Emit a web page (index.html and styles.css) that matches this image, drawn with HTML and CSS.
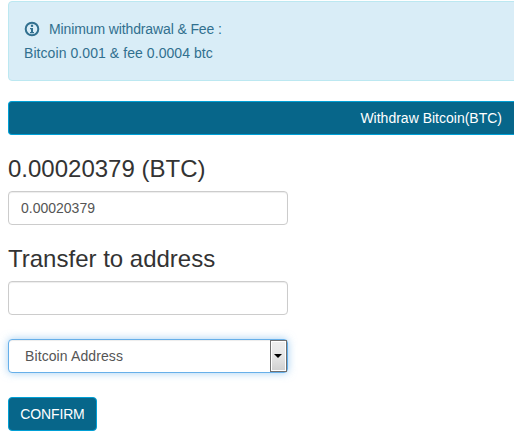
FILE: index.html
```html
<!DOCTYPE html>
<html lang="en">
<head>
  <meta charset="UTF-8" />
  <title>Withdraw Bitcoin</title>
  <link rel="stylesheet" href="styles.css">
</head>
<body>

<div class="alert">
  <p class="alert-line">
    <svg class="info-icon" viewBox="0 0 16 16" width="16" height="16" aria-hidden="true">
      <circle cx="8" cy="8" r="6.3" fill="none" stroke="#31708f" stroke-width="2"/>
      <rect x="6.9" y="3.7" width="2.2" height="2.2" fill="#31708f"/>
      <path d="M6 7h3v4h1v1.3H6V11h1V8.3H6z" fill="#31708f"/>
    </svg>
    <span class="alert-title">Minimum withdrawal &amp; Fee :</span>
  </p>
  <p class="alert-line alert-fee">Bitcoin 0.001 &amp; fee 0.0004 btc</p>
</div>

<div class="bar">Withdraw Bitcoin(BTC)</div>

<form class="withdraw-form">
  <h3>0.00020379 (BTC)</h3>
  <input class="field" type="text" value="0.00020379">

  <h3 class="second">Transfer to address</h3>
  <input class="field" type="text">

  <div class="select-wrap">
    <select class="field select">
      <option>Bitcoin Address</option>
    </select>
    <span class="select-arrow"></span>
  </div>

  <button class="confirm" type="button">CONFIRM</button>
</form>

</body>
</html>
```

FILE: styles.css
```css
html, body {
  overflow: hidden;
}
body {
  font-family: 'Liberation Sans', Arial, sans-serif;
  font-size: 14px;
  color: #333;
  background: #fff;
  margin: 0;
  padding: 1px 0 0 8px;
  height: 445px;
  box-sizing: border-box;
}
.alert {
  box-sizing: border-box;
  width: 530px;
  height: 80px;
  padding: 15px;
  background: #d9edf7;
  border: 1px solid #bce8f1;
  border-radius: 4px;
  color: #31708f;
}
.alert-line {
  margin: 0;
  line-height: 24px;
  height: 24px;
}
.alert-line:first-child {
  display: flex;
  align-items: center;
}
.alert-title {
  letter-spacing: -0.12px;
}
.alert-fee {
  letter-spacing: 0.07px;
}
.info-icon {
  margin-right: 9px;
}
.bar {
  box-sizing: border-box;
  width: 506px;
  height: 34px;
  margin-top: 20px;
  padding-right: 12px;
  background: #07668a;
  border: 1px solid #00a0d6;
  border-right: 0;
  border-radius: 4px 0 0 4px;
  color: #fff;
  line-height: 32px;
  text-align: right;
}
h3 {
  font-size: 24px;
  font-weight: 500;
  line-height: 26px;
  margin: 21px 0 9px;
}
h3.second {
  margin-top: 21px;
  margin-bottom: 9px;
}
.field {
  display: block;
  box-sizing: border-box;
  width: 280px;
  height: 34px;
  padding: 6px 12px;
  font-family: inherit;
  font-size: 14px;
  color: #555;
  background: #fff;
  border: 1px solid #ccc;
  border-radius: 4px;
  box-shadow: inset 0 1px 1px rgba(0, 0, 0, 0.075);
}
.select-wrap {
  position: relative;
  width: 280px;
  margin-top: 24px;
}
.select {
  appearance: none;
  -webkit-appearance: none;
  padding-left: 16px;
  letter-spacing: 0.1px;
  border-color: #66afe9;
  box-shadow: inset 0 1px 1px rgba(0, 0, 0, 0.075), 0 0 8px rgba(102, 175, 233, 0.6);
}
.select-arrow {
  position: absolute;
  top: 1px;
  right: 1px;
  box-sizing: border-box;
  width: 17px;
  height: 32px;
  background: linear-gradient(#efefef 0%, #e6e6e6 50%, #cfcfcf 100%);
  border: 1px solid #707070;
  box-shadow: inset 0 0 0 1px #fff;
}
.select-arrow::after {
  content: "";
  position: absolute;
  top: 13px;
  left: 3px;
  border-style: solid;
  border-width: 4px 4px 0;
  border-color: #000 transparent transparent;
}
.confirm {
  display: block;
  box-sizing: border-box;
  width: 89px;
  height: 34px;
  margin-top: 24px;
  padding: 0;
  font-family: inherit;
  font-size: 14px;
  letter-spacing: -0.15px;
  color: #fff;
  background: #07668a;
  border: 1px solid #00a0d6;
  border-radius: 4px;
}
```
